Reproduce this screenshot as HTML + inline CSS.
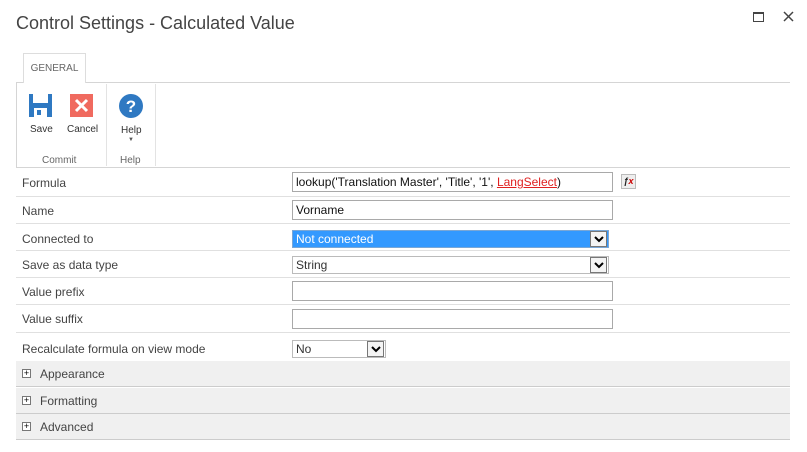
<!DOCTYPE html>
<html><head><meta charset="utf-8"><style>
*{box-sizing:border-box;margin:0;padding:0}
body{width:807px;height:452px;background:#fff;font-family:"Liberation Sans",sans-serif;color:#444;position:relative;overflow:hidden}
.abs{position:absolute}
.title{left:16px;top:13px;font-size:18px;color:#444}
.tab{left:23px;top:53px;width:63px;height:30px;border:1px solid #ddd;border-bottom:none;background:#fff;font-size:10px;color:#666;text-align:center;line-height:30px;z-index:2}
.ribbon{left:16px;top:82px;width:774px;height:86px;border:1px solid #d5d5d5;border-right:none}
.sep{top:84px;width:1px;height:82px;background:#e3e3e3}
.btn{font-size:10px;color:#333;text-align:center}
.grp{font-size:10px;color:#666;top:155px}
.row{left:16px;width:774px;height:27px;border-bottom:1px solid #e0e0e0}
.lbl{left:22px;font-size:12px;color:#444}
.inp{left:292px;width:321px;height:20px;border:1px solid #a9a9a9;background:#fff;font-size:12px;color:#111;padding-left:3px;line-height:18px}
.dd{position:absolute;right:1px;top:0px;width:17px;height:16px;border:1px solid #777;background:#f4f4f4}
.dd svg{position:absolute;left:3px;top:4px}
.sec{left:16px;width:774px;height:26px;background:#f0f0f0;border-bottom:1px solid #ccc;font-size:12px;color:#444;line-height:27px;padding-left:24px}
.plus{position:absolute;left:6px;top:8px;width:9px;height:9px;border:1px solid #777;background:#fff;font-size:9px;line-height:7px;text-align:center;color:#000}
</style></head><body>
<div class="abs title">Control Settings - Calculated Value</div>
<div class="abs" style="left:753px;top:12px;width:11px;height:10px;border:1px solid #444;border-top:2px solid #444"></div>
<svg class="abs" style="left:783px;top:11px" width="11" height="11"><path d="M1 1L10 10M10 1L1 10" stroke="#444" stroke-width="1.5"/></svg>
<div class="abs tab">GENERAL</div>
<div class="abs ribbon"></div>
<svg class="abs" style="left:29px;top:94px" width="23" height="23" viewBox="0 0 23 23"><rect width="23" height="23" fill="#2f79c2"/><rect x="4" y="0" width="15" height="9" fill="#fff"/><rect x="5" y="14" width="13" height="9" fill="#fff"/><rect x="8" y="16" width="4" height="5" fill="#2f79c2"/></svg>
<svg class="abs" style="left:70px;top:94px" width="23" height="23"><rect width="23" height="23" fill="#f06a5f"/><path d="M6 6L17 17M17 6L6 17" stroke="#fff" stroke-width="3"/></svg>
<svg class="abs" style="left:119px;top:94px" width="24" height="24"><circle cx="12" cy="12" r="12" fill="#2f79c2"/><text x="12" y="18" font-size="17" font-weight="bold" fill="#fff" text-anchor="middle" font-family="Liberation Sans">?</text></svg>
<div class="abs btn" style="left:30px;top:124px">Save</div>
<div class="abs btn" style="left:67px;top:124px">Cancel</div>
<div class="abs btn" style="left:121px;top:125px">Help</div>
<div class="abs" style="left:128px;top:137px;font-size:6px;color:#555">▼</div>
<div class="abs sep" style="left:106px"></div>
<div class="abs sep" style="left:155px"></div>
<div class="abs grp" style="left:42px">Commit</div>
<div class="abs grp" style="left:120px">Help</div>

<div class="abs row" style="top:170px"></div>
<div class="abs row" style="top:197px"></div>
<div class="abs row" style="top:224px"></div>
<div class="abs row" style="top:251px"></div>
<div class="abs row" style="top:278px"></div>
<div class="abs row" style="top:306px"></div>
<div class="abs row" style="top:333px;border:none"></div>

<div class="abs lbl" style="top:176px">Formula</div>
<div class="abs lbl" style="top:204px">Name</div>
<div class="abs lbl" style="top:232px">Connected to</div>
<div class="abs lbl" style="top:258px">Save as data type</div>
<div class="abs lbl" style="top:285px">Value prefix</div>
<div class="abs lbl" style="top:312px">Value suffix</div>
<div class="abs lbl" style="top:342px">Recalculate formula on view mode</div>

<div class="abs inp" style="top:172px">lookup('Translation Master', 'Title', '1', <span style="color:#e02020;text-decoration:underline">LangSelect</span>)</div>
<div class="abs" style="left:621px;top:174px;width:15px;height:15px;border:1px solid #bbb;background:#eee;font-size:9px;font-style:italic;font-weight:bold;line-height:13px;text-align:center;color:#222">ƒ<span style="color:#c00">x</span></div>
<div class="abs inp" style="top:200px">Vorname</div>
<div class="abs inp" style="top:230px;width:317px;height:18px;background:#3399ff;color:#fff;border-color:#7aa7d6;line-height:16px">Not connected<div class="dd"><svg width="10" height="7"><path d="M1 1L5 5L9 1" stroke="#000" stroke-width="2" fill="none"/></svg></div></div>
<div class="abs inp" style="top:256px;width:317px;height:18px;border-color:#bbb;line-height:16px;color:#333">String<div class="dd"><svg width="10" height="7"><path d="M1 1L5 5L9 1" stroke="#000" stroke-width="2" fill="none"/></svg></div></div>
<div class="abs inp" style="top:281px"></div>
<div class="abs inp" style="top:309px"></div>
<div class="abs inp" style="top:340px;width:94px;height:18px;border-color:#bbb;line-height:16px;color:#333">No<div class="dd"><svg width="10" height="7"><path d="M1 1L5 5L9 1" stroke="#000" stroke-width="2" fill="none"/></svg></div></div>

<div class="abs sec" style="top:361px"><span class="plus">+</span>Appearance</div>
<div class="abs sec" style="top:388px"><span class="plus">+</span>Formatting</div>
<div class="abs sec" style="top:414px"><span class="plus">+</span>Advanced</div>
</body></html>
